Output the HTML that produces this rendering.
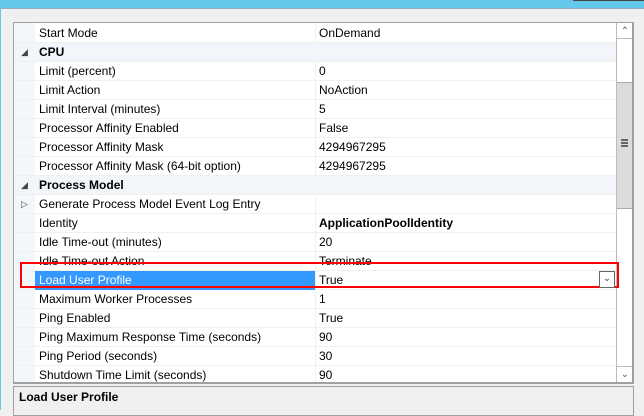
<!DOCTYPE html>
<html><head><style>
*{margin:0;padding:0;box-sizing:border-box}
body{width:644px;height:410px;background:#f0f0f0;position:relative;overflow:hidden;font-family:"Liberation Sans",sans-serif;font-size:12px;color:#000}
.top{position:absolute;left:0;top:0;width:644px;height:9px;background:#63c8e9;border-bottom:1px solid #9ab}
.lb{position:absolute;left:0;top:9px;width:1px;height:401px;background:#63c8e9}
.grid{position:absolute;left:13px;top:22px;width:621px;height:362px;border:1px solid #a0a0a0;border-right-width:2px;border-bottom-width:2px;background:#fff;overflow:hidden}
.gut{position:absolute;left:0;top:0;width:21px;height:100%;background:#f3f6fb}
.row{position:absolute;left:0;width:602px;height:19px;border-bottom:1px solid #f0f0f0}
.row .n{position:absolute;left:25px;white-space:nowrap;line-height:19px;top:0}
.row .v{position:absolute;left:301px;white-space:nowrap;border-left:1px solid #f0f0f0;padding-left:3px;height:19px;top:0;line-height:19px}
.cat{background:#f2f5fa}
.cat .n{font-weight:bold}
.ic{position:absolute;left:7px;top:0;line-height:19px;font-size:9px;color:#444}
.sel{position:absolute;left:21px;top:0;width:280px;height:19px;background:#3399ff}
.sb{position:absolute;left:602px;top:0;width:17px;height:360px;border-left:1px solid #bbb;background:#fff}
.thumb{position:absolute;left:0;top:59px;width:16px;height:127px;background:#dcdcdc;border-top:1px solid #aaa;border-bottom:1px solid #aaa}
.red{position:absolute;left:20px;top:262px;width:599px;height:26px;border:2px solid #f00}
.dd{position:absolute;left:599px;top:271px;width:16px;height:17px;border:1px solid #666;background:#fff;font-size:10px;color:#555;text-align:center;line-height:14px}
.bot{position:absolute;left:13px;top:386px;width:621px;height:30px;border:1px solid #a0a0a0;background:#f0f0f0;font-weight:bold;padding:3px 0 0 5px}
</style></head><body>
<div class="top"></div><div style="position:absolute;left:573px;top:0;width:71px;height:1px;background:#444"></div>
<div class="lb"></div>
<div class="grid">
<div class="gut"></div>
<div style="position:absolute;left:0;top:1px;width:602px;height:380px">
<div class="row" style="top:0"><span class="n">Start Mode</span><span class="v">OnDemand</span></div>
<div class="row cat" style="top:19px"><span class="ic">◢</span><span class="n">CPU</span></div>
<div class="row" style="top:38px"><span class="n">Limit (percent)</span><span class="v">0</span></div>
<div class="row" style="top:57px"><span class="n">Limit Action</span><span class="v">NoAction</span></div>
<div class="row" style="top:76px"><span class="n">Limit Interval (minutes)</span><span class="v">5</span></div>
<div class="row" style="top:95px"><span class="n">Processor Affinity Enabled</span><span class="v">False</span></div>
<div class="row" style="top:114px"><span class="n">Processor Affinity Mask</span><span class="v">4294967295</span></div>
<div class="row" style="top:133px"><span class="n">Processor Affinity Mask (64-bit option)</span><span class="v">4294967295</span></div>
<div class="row cat" style="top:152px"><span class="ic">◢</span><span class="n">Process Model</span></div>
<div class="row" style="top:171px"><span class="ic">▷</span><span class="n">Generate Process Model Event Log Entry</span><span class="v"></span></div>
<div class="row" style="top:190px"><span class="n">Identity</span><span class="v" style="font-weight:bold">ApplicationPoolIdentity</span></div>
<div class="row" style="top:209px"><span class="n">Idle Time-out (minutes)</span><span class="v">20</span></div>
<div class="row" style="top:228px"><span class="n">Idle Time-out Action</span><span class="v">Terminate</span></div>
<div class="row" style="top:247px"><div class="sel"></div><span class="n" style="color:#fff">Load User Profile</span><span class="v">True</span></div>
<div class="row" style="top:266px"><span class="n">Maximum Worker Processes</span><span class="v">1</span></div>
<div class="row" style="top:285px"><span class="n">Ping Enabled</span><span class="v">True</span></div>
<div class="row" style="top:304px"><span class="n">Ping Maximum Response Time (seconds)</span><span class="v">90</span></div>
<div class="row" style="top:323px"><span class="n">Ping Period (seconds)</span><span class="v">30</span></div>
<div class="row" style="top:342px"><span class="n">Shutdown Time Limit (seconds)</span><span class="v">90</span></div>
</div>
<div class="sb">
<div style="position:absolute;left:0;top:0;width:16px;height:16px;border-bottom:1px solid #bbb;text-align:center;font-size:10px;color:#666;line-height:18px">&#8963;</div>
<div class="thumb"><div style="position:absolute;left:4px;top:56px;width:7px;height:8px;border-top:2px solid #666;border-bottom:2px solid #666"></div><div style="position:absolute;left:4px;top:59px;width:7px;height:2px;background:#666"></div></div>
<div style="position:absolute;left:0;top:343px;width:16px;height:17px;border-top:1px solid #bbb;text-align:center;font-size:10px;color:#666;line-height:16px">&#8964;</div>
</div>
</div>
<div class="red"></div>
<div class="dd">&#8964;</div>
<div class="bot">Load User Profile</div>
</body></html>
